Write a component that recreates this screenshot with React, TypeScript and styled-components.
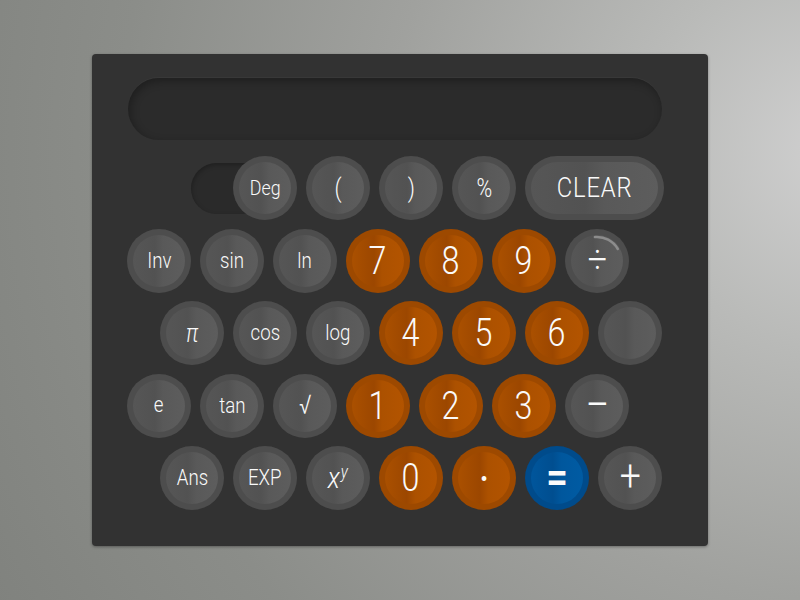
import React from 'react';
import styled, { createGlobalStyle, css } from 'styled-components';

const GlobalStyle = createGlobalStyle`
    html, body {
        margin: 0;
        padding: 0;
    }
    body {
        font-family: "Roboto", "Liberation Sans", sans-serif;
        background: radial-gradient(circle at 840px 150px, #d0d0d0 0px, #b9bab8 200px, #a0a19e 450px, #8b8d89 720px, #80827e 960px);
        min-height: 600px;
    }
`;

type Tone = 'grey' | 'orange' | 'blue';

const tones = {
    grey: {
        ring: '#4d4d4d',
        face: 'linear-gradient(90deg, #565656 0%, #525252 42%, #595959 58%, #5d5d5d 100%)',
    },
    orange: {
        ring: '#9d4900',
        face: 'linear-gradient(90deg, #aa5000 0%, #9c4700 42%, #ac5100 58%, #b35400 100%)',
    },
    blue: {
        ring: '#004b8b',
        face: 'linear-gradient(90deg, #00569c 0%, #004e90 42%, #00579d 58%, #005ba3 100%)',
    },
};

const Screen = styled.div`
    width: 800px;
    height: 600px;
    display: flex;
    align-items: center;
    justify-content: center;
`;

const Panel = styled.div`
    width: 616px;
    height: 492px;
    box-sizing: border-box;
    padding: 24px 0 36px 35px;
    background-color: #323232;
    border-radius: 4px;
    box-shadow: 0 1px 3px rgba(0, 0, 0, 0.35);
    display: flex;
    flex-direction: column;
`;

const Display = styled.div`
    width: 534px;
    height: 62px;
    margin-left: 1px;
    border-radius: 31px;
    background-color: #2b2b2b;
    box-shadow: inset 2px 3px 8px rgba(0, 0, 0, 0.3), 0 -1px 0 rgba(255, 255, 255, 0.03);
`;

const Keypad = styled.div`
    margin-top: 16px;
    display: flex;
    flex-direction: column;
    gap: 8.5px;
`;

const Row = styled.div<{ $indent: number }>`
    display: flex;
    align-items: center;
    gap: 9px;
    height: 64px;
    padding-left: ${p => p.$indent}px;
`;

const Key = styled.button<{ $tone: Tone; $wide?: boolean }>`
    position: relative;
    flex: none;
    width: ${p => (p.$wide ? 139 : 64)}px;
    height: 64px;
    padding: 0;
    border: none;
    border-radius: 32px;
    background: ${p => tones[p.$tone].ring};
    color: #fafafa;
    font-family: "Roboto", "Liberation Sans", sans-serif;
    display: flex;
    align-items: center;
    justify-content: center;
    cursor: pointer;

    &::before {
        content: '';
        position: absolute;
        inset: 6px;
        border-radius: 26px;
        background: ${p => tones[p.$tone].face};
    }
`;

const Label = styled.span<{ $size: number; $weight?: number; $italic?: boolean; $spacing?: number; $shift?: number }>`
    position: relative;
    display: inline-block;
    font-size: ${p => p.$size}px;
    font-weight: ${p => p.$weight ?? 300};
    line-height: 1;
    letter-spacing: ${p => p.$spacing ?? 0}px;
    transform: translateY(${p => p.$shift ?? 0}px) scaleX(0.85);
    ${p => p.$italic && css`font-style: italic;`}
`;

const Sup = styled.sup`
    font-size: 0.6em;
    vertical-align: 0;
    position: relative;
    top: -0.55em;
    margin-left: 1px;
`;

const Switch = styled.div`
    position: relative;
    flex: none;
    width: 106px;
    height: 64px;
    display: flex;
    align-items: center;
`;

const Track = styled.div`
    width: 76px;
    height: 51px;
    border-radius: 26px;
    background-color: #2a2a2a;
    box-shadow: inset 1px 2px 4px rgba(0, 0, 0, 0.25);
`;

const Knob = styled(Key)`
    position: absolute;
    right: 0;
    top: 0;
`;

const Arc = styled.svg`
    position: absolute;
    inset: 0;
    width: 64px;
    height: 64px;
    pointer-events: none;
`;

type Cell = { text?: React.ReactNode; tone?: Tone; size?: number; weight?: number; italic?: boolean; shift?: number; arc?: boolean };

const g = (text: React.ReactNode, size = 22, extra: Partial<Cell> = {}): Cell => ({ text, tone: 'grey', size, ...extra });
const o = (text: string): Cell => ({ text, tone: 'orange', size: 38 });

const rows: { indent: number; keys: Cell[] }[] = [
    {
        indent: 0,
        keys: [g('Inv'), g('sin'), g('ln'), o('7'), o('8'), o('9'), g('÷', 40, { arc: true, shift: -1 })],
    },
    {
        indent: 33,
        keys: [g('π', 25, { italic: true }), g('cos'), g('log'), o('4'), o('5'), o('6'), { tone: 'grey' }],
    },
    {
        indent: 0,
        keys: [g('e', 22, { shift: -1 }), g('tan'), g('√', 27), o('1'), o('2'), o('3'), g('−', 50, { shift: -1 })],
    },
    {
        indent: 33,
        keys: [
            g('Ans'),
            g('EXP'),
            g(<>x<Sup>y</Sup></>, 30, { italic: true }),
            o('0'),
            { text: '·', tone: 'orange', size: 34, weight: 700 },
            { text: '=', tone: 'blue', size: 46, weight: 500, shift: -1 },
            g('+', 44, { shift: -2 }),
        ],
    },
];

const App = () => {
    return (
        <Screen>
            <GlobalStyle />
            <Panel>
                <Display />
                <Keypad>
                    <Row $indent={64}>
                        <Switch>
                            <Track />
                            <Knob $tone="grey">
                                <Label $size={21}>Deg</Label>
                            </Knob>
                        </Switch>
                        <Key $tone="grey"><Label $size={26}>(</Label></Key>
                        <Key $tone="grey"><Label $size={26}>)</Label></Key>
                        <Key $tone="grey"><Label $size={25}>%</Label></Key>
                        <Key $tone="grey" $wide><Label $size={28} $spacing={1}>CLEAR</Label></Key>
                    </Row>
                    {rows.map((row, i) => (
                        <Row key={i} $indent={row.indent}>
                            {row.keys.map((k, j) => (
                                <Key key={j} $tone={k.tone ?? 'grey'}>
                                    {k.arc && (
                                        <Arc viewBox="0 0 64 64">
                                            <path d="M29.9 8.1 A24 24 0 0 1 52.8 20" fill="none" stroke="#8c8c8c" strokeWidth="2.5" strokeLinecap="round" />
                                        </Arc>
                                    )}
                                    {k.text !== undefined && (
                                        <Label $size={k.size ?? 22} $weight={k.weight} $italic={k.italic} $shift={k.shift}>
                                            {k.text}
                                        </Label>
                                    )}
                                </Key>
                            ))}
                        </Row>
                    ))}
                </Keypad>
            </Panel>
        </Screen>
    );
};

export default App;
